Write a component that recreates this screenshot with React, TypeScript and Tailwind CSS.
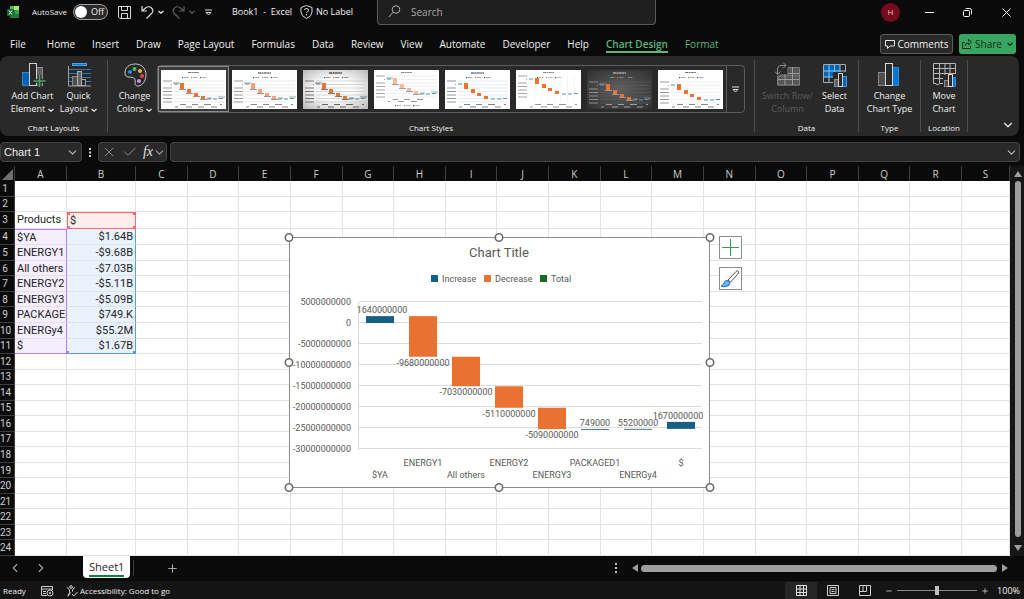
import { useState } from 'react'
import type { ReactNode } from 'react'
import { Check, ChevronDown, ChevronLeft, ChevronRight, Minus, Plus, X } from 'lucide-react'

const MENU = [
  'File', 'Home', 'Insert', 'Draw', 'Page Layout', 'Formulas', 'Data', 'Review',
  'View', 'Automate', 'Developer', 'Help', 'Chart Design', 'Format',
]

const COLUMNS = 'ABCDEFGHIJKLMNOPQRS'.split('')

const CELLS: Record<number, [string, string]> = {
  3: ['Products', '$'],
  4: ['$YA', '$1.64B'],
  5: ['ENERGY1', '-$9.68B'],
  6: ['All others', '-$7.03B'],
  7: ['ENERGY2', '-$5.11B'],
  8: ['ENERGY3', '-$5.09B'],
  9: ['PACKAGED1', '$749.K'],
  10: ['ENERGy4', '$55.2M'],
  11: ['$', '$1.67B'],
}

const SERIES = [
  { name: '$YA', value: 1640000000 },
  { name: 'ENERGY1', value: -9680000000 },
  { name: 'All others', value: -7030000000 },
  { name: 'ENERGY2', value: -5110000000 },
  { name: 'ENERGY3', value: -5090000000 },
  { name: 'PACKAGED1', value: 749000 },
  { name: 'ENERGy4', value: 55200000 },
  { name: '$', value: 1670000000 },
]

const BLUE = '#156082'
const ORANGE = '#e97132'
const GREEN = '#196b24'

type ThumbStyle = {
  id: number
  bg: string
  ink: string
  grid: string
  bar: string
  top: number
  bold?: boolean
  legendBottom?: boolean
  vertical?: boolean
  labels?: boolean
}

const THUMBS: ThumbStyle[] = [
  { id: 1, bg: '#ffffff', ink: '#777777', grid: '#e4e4e4', bar: '#ed7331', top: 13, labels: true },
  { id: 2, bg: '#ffffff', ink: '#777777', grid: '#e4e4e4', bar: '#f3a37c', top: 13, bold: true, labels: true },
  { id: 3, bg: 'url(#silver)', ink: '#555555', grid: '#c4c4c4', bar: '#ed7331', top: 13, bold: true, labels: true },
  { id: 4, bg: '#ffffff', ink: '#888888', grid: '#e8e8e8', bar: '#f5b8a2', top: 8, legendBottom: true, labels: true },
  { id: 5, bg: '#ffffff', ink: '#667788', grid: '#dde4ea', bar: '#ed7331', top: 13, bold: true },
  { id: 6, bg: '#ffffff', ink: '#888888', grid: '#ececec', bar: '#ed7331', top: 8, vertical: true },
  { id: 7, bg: 'url(#charcoal)', ink: '#a8a8a8', grid: '#5c5c5c', bar: '#ed7331', top: 14, bold: true, labels: true },
  { id: 8, bg: '#ffffff', ink: '#777777', grid: '#ececec', bar: '#ed7331', top: 14 },
]

function ChartThumb({ s }: { s: ThumbStyle }) {
  const bars = s.labels
    ? [[21, 0, 6], [28, 6, 4], [35, 10, 3], [42, 13, 3]]
    : [[21, 0, 6], [28, 6, 4], [34, 10, 3], [41, 13, 3]]
  return (
    <svg viewBox="0 0 65 39" className="block h-[39px] w-[65px]" aria-hidden="true">
      <defs>
        <radialGradient id="silver" r="0.7">
          <stop offset="0.4" stopColor="#ffffff" />
          <stop offset="1" stopColor="#b9b9b9" />
        </radialGradient>
        <radialGradient id="charcoal" r="0.7">
          <stop offset="0" stopColor="#606060" />
          <stop offset="1" stopColor="#303030" />
        </radialGradient>
      </defs>
      <rect width="65" height="39" fill={s.bg} />
      <path d={s.bold ? 'M26 3h13' : 'M27 2.500h11'} stroke={s.ink} strokeWidth={s.bold ? 1.500 : 1} strokeDasharray="3 .4 2 .4" />
      {[0, 1, 2].map((i) => (
        <g key={i} transform={`translate(${21 + i * 9} ${s.legendBottom ? 35.500 : 7.500})`}>
          <rect y="-0.500" width="1.200" height="1.200" fill={[BLUE, ORANGE, GREEN][i]} />
          <path d="M2 0h4.500" stroke={s.ink} strokeWidth=".6" />
        </g>
      ))}
      {[0, 1, 2, 3, 4, 5, 6].map((i) => {
        const y = s.top - 2 + i * 3.500
        return (
          <g key={i}>
            <path d={`M${i === 1 ? 10 : 2} ${y}H11`} stroke={s.ink} strokeWidth="1" opacity=".75" />
            {s.vertical
              ? <path d={`M${19 + i * 6.500} ${s.top - 2}v26`} stroke={s.grid} strokeWidth=".6" />
              : <path d={`M13 ${y}H63`} stroke={s.grid} strokeWidth=".7" />}
          </g>
        )
      })}
      <path d={`M13 ${s.top + 1}h4M46 ${s.top + 16}h4M52 ${s.top + 16}h4M58 ${s.top + 15.500}h4`} stroke="#4a9bbb" strokeWidth="1" />
      {bars.map(([x, y, h]) => (
        <g key={x}>
          {s.labels && <path d={`M${x - 3} ${s.top + y + h + 0.500}h7`} stroke={s.ink} strokeWidth=".8" />}
          <rect x={x - 2} y={s.top + y} width="4" height={h} fill={s.bar} />
        </g>
      ))}
      {s.labels && <path d={`M12 ${s.top}h7M46 ${s.top + 15}h5M57 ${s.top + 14}h7`} stroke={s.ink} strokeWidth=".7" />}
      <path
        d={s.legendBottom ? 'M19 29.500h5M30 29.500h6M43 29.500h6M14 31.500h2M24 31.500h6M37 31.500h6' : 'M19 34.500h6M31 34.500h6M43 34.500h7M59 34.500h2M14 37h3M25 37h6M37 37h6M50 37h6'}
        stroke={s.ink}
        strokeWidth=".9"
      />
    </svg>
  )
}

function Caret({ className = '' }: { className?: string }) {
  return (
    <svg width="6" height="6" viewBox="0 0 6 6" fill="none" stroke="currentColor" strokeWidth="1.200" className={`inline-block shrink-0 ${className}`}>
      <path d="m.5 2 2.500 2.200L5.500 2" />
    </svg>
  )
}

function AddElementIcon() {
  return (
    <svg width="26" height="26" viewBox="0 0 26 26" fill="none">
      <rect x="2.500" y="10.500" width="7" height="13" fill="#0063b1" stroke="#2b88d8" />
      <rect x="16.500" y="5.500" width="6" height="18" fill="#616161" stroke="#8a8a8a" />
      <rect x="9.500" y="1.500" width="7" height="22" fill="#292929" stroke="#d0d0d0" />
      <path d="M19.500 13v12M13.500 19h12" stroke="#292929" strokeWidth="3.500" />
      <path d="M19.500 13v12M13.500 19h12" stroke="#4ca564" strokeWidth="1.500" />
    </svg>
  )
}

function QuickLayoutIcon() {
  return (
    <svg width="26" height="26" viewBox="0 0 26 26" fill="none">
      <rect x="6.500" y="1.500" width="14" height="2" fill="#0078d4" stroke="#4aa3e8" />
      <path d="M3 7.500h22M3 11.500h22M3 15.500h22M3 19.500h22" stroke="#2b7cbf" />
      <path d="M2.500 4v20H25" stroke="#a0a0a0" />
      <rect x="6.500" y="14.500" width="5" height="9" fill="#4d4d4d" stroke="#8a8a8a" />
      <rect x="15.500" y="17.500" width="4" height="6" fill="#292929" stroke="#a0a0a0" />
      <rect x="11.500" y="9.500" width="4" height="14" fill="#616161" stroke="#b0b0b0" />
    </svg>
  )
}

function PaletteIcon() {
  return (
    <svg width="26" height="26" viewBox="0 0 26 26" fill="none">
      <path d="M3 11C3 5 7.500 2 13.500 2S24 6.500 24 12.500c0 6-3.500 11.500-8 11.500-5 0-1.500-4.500-3.500-7.500C10.500 14 3 17 3 11Z" stroke="#c8c8c8" />
      <circle cx="8" cy="10" r="2" fill="#2b88d8" />
      <circle cx="12.500" cy="7" r="2" fill="#4ec06a" />
      <circle cx="18" cy="9" r="2" fill="#f2b04c" />
      <circle cx="20" cy="14" r="2" fill="#e0483e" />
      <circle cx="17" cy="19" r="2" fill="#c792e0" />
    </svg>
  )
}

function SwitchIcon() {
  return (
    <svg width="26" height="26" viewBox="0 0 26 26" fill="none" stroke="#7d7d7d">
      <path d="M13 5.500h11.500v17.500h-22V14" fill="#565656" />
      <path d="M3 14h21.500v9H3Z" fill="#565656" />
      <path d="M13 11.500h11.500M3 17.500h21.500M10 12v11M17.500 5v18" stroke="#9a9a9a" />
      <path d="M1 2h11v10H1Z" fill="#292929" stroke="none" />
      <path d="M2.500 12.500V7q0-3.500 3.500-3.500h5M8 .5l3 3-3 3M0 9.500l2.500 3 3-3" stroke="#8a8a8a" />
    </svg>
  )
}

function SelectDataIcon() {
  return (
    <svg width="26" height="26" viewBox="0 0 26 26" fill="none">
      <path d="M1.500 2.500h22v18h-22Z" stroke="#a8a8a8" />
      <path d="M2 3h16v12H2Z" fill="#0067b8" />
      <path d="M7 3v17M12.500 3v17M18 3v17M2 9h21M2 15h21" stroke="#8fc4ee" />
      <path d="M11 10h15v16H11Z" fill="#292929" />
      <rect x="12.500" y="17.500" width="4" height="7" fill="#616161" stroke="#8a8a8a" />
      <rect x="20.500" y="14.500" width="4" height="10" fill="#0067b8" stroke="#3d9be0" />
      <rect x="16.500" y="11.500" width="4" height="13" fill="#292929" stroke="#d0d0d0" />
    </svg>
  )
}

function ChartTypeIcon() {
  return (
    <svg width="26" height="26" viewBox="0 0 26 26" fill="none">
      <rect x="2.500" y="10.500" width="7" height="13" fill="#4d4d4d" stroke="#8a8a8a" />
      <rect x="16.500" y="5.500" width="6" height="18" fill="#0078d4" stroke="#2b88d8" />
      <rect x="9.500" y="1.500" width="7" height="22" fill="#292929" stroke="#d8d8d8" />
    </svg>
  )
}

function MoveChartIcon() {
  return (
    <svg width="26" height="26" viewBox="0 0 26 26" fill="none">
      <path d="M12 21.500H9l-3 1.500-1-1.500H2.500v-20h22V12M3 6.500h21M3 11.500h21M3 16.500h13M8.500 2v19M14 2v15M19 2v12" stroke="#b8b8b8" />
      <path d="M12 13h14v13H12Z" fill="#292929" />
      <rect x="13.500" y="18.500" width="4" height="6" fill="#4d4d4d" stroke="#8a8a8a" />
      <rect x="21.500" y="15.500" width="3" height="9" fill="#0078d4" stroke="#2b88d8" />
      <rect x="17.500" y="12.500" width="4" height="12" fill="#292929" stroke="#d8d8d8" />
    </svg>
  )
}

function RibbonButton({ icon, lines, className = '', caret, disabled }: {
  icon: ReactNode
  lines: [string, string]
  className?: string
  caret?: boolean
  disabled?: boolean
}) {
  return (
    <button
      disabled={disabled}
      className={`flex shrink-0 flex-col items-center pt-0.5 text-[9px] leading-[13px] whitespace-nowrap disabled:text-[#5c5c5c] ${className}`}
    >
      {icon}
      <span className="mt-px">{lines[0]}</span>
      <span>
        {lines[1]}
        {caret && <Caret className="ml-[3px]" />}
      </span>
    </button>
  )
}

function RibbonGroup({ label, className, children }: { label: string; className: string; children: ReactNode }) {
  return (
    <section className={`flex shrink-0 flex-col justify-between border-r border-[#4d4d4d] ${className}`}>
      <div className="flex justify-center">{children}</div>
      <h2 className="text-center text-[8px] leading-2">{label}</h2>
    </section>
  )
}

function TitleBar() {
  const [autoSave, setAutoSave] = useState(false)
  return (
    <header className="flex h-7 shrink-0 items-center pb-1">
      <div className="flex w-[377px] shrink-0 items-center pl-[7px] text-[8px] whitespace-nowrap">
        <svg width="13" height="14" viewBox="0 0 13 14" aria-label="Excel">
          <path d="M3 1h5v4H3Z" fill="#55b84a" />
          <path d="M7 1h5v4H7Z" fill="#b5e26b" />
          <path d="M3 5h9v8H3Z" fill="#1e7a3d" />
          <path d="M8 5h4v4H8Z" fill="#3fa24a" />
          <rect y="4" width="7" height="7" rx="1" fill="#0f6b38" />
          <path d="m2 5.500 3 4m0-4-3 4" stroke="#fff" />
        </svg>
        <span className="ml-3">AutoSave</span>
        <button
          role="switch"
          aria-checked={autoSave}
          aria-label="AutoSave"
          onClick={() => setAutoSave(!autoSave)}
          className="ml-1.5 flex h-4 w-[35px] items-center gap-1 rounded-full border border-[#a0a0a0] bg-[#292929] pl-px text-[9px]"
        >
          <span className="h-3 w-3 rounded-full bg-white" />
          <span>{autoSave ? 'On' : 'Off'}</span>
        </button>
        <button aria-label="Save" className="ml-[10px]">
          <svg width="13" height="14" viewBox="0 0 13 14" fill="none" stroke="#d8d8d8">
            <path d="M.5 1.500h12v12H2l-1.500-1.500ZM3.500 1.500v4h6v-4M3.500 13.500v-5h6v5" />
          </svg>
        </button>
        <button aria-label="Undo" className="ml-[10px] flex items-center gap-1">
          <svg width="13" height="14" viewBox="0 0 13 14" fill="none" stroke="#d8d8d8" strokeWidth="1.200">
            <path d="M1 1v5h5M1 6l3.500-3Q8 .5 10.500 3T11 8l-5.500 5.500" />
          </svg>
          <Caret />
        </button>
        <button aria-label="Redo" disabled className="ml-2 flex items-center gap-1 text-[#5c5c5c]">
          <svg width="13" height="14" viewBox="0 0 13 14" fill="none" stroke="currentColor" strokeWidth="1.200">
            <path d="M12 1v5H7M12 6 8.500 3Q5 .5 2.500 3T2 8l5.500 5.500" />
          </svg>
          <Caret />
        </button>
        <button aria-label="Customize toolbar" className="ml-[10px]">
          <svg width="7" height="7" viewBox="0 0 7 7" fill="none" stroke="#e0e0e0">
            <path d="M0 1h7M1 3.500h5L3.500 6Z" />
          </svg>
        </button>
        <span className="ml-5 text-[9px]">Book1&nbsp; -&nbsp; Excel</span>
        <svg width="13" height="14" viewBox="0 0 13 14" fill="none" stroke="#d8d8d8" className="ml-2">
          <path d="M6.500.5 12 2.500V7q0 4-5.500 6.500Q1 11 1 7V2.500ZM4.500 5q0-1.500 2-1.500t2 1.500-2 2.500M6.500 9v1.500" />
        </svg>
        <span className="ml-[3px] text-[9px]">No Label</span>
      </div>
      <label className="flex h-[26px] w-[279px] items-center gap-[10px] rounded-b border border-t-0 border-[#5a5a5a] bg-[#1f1f1f] px-[10px]">
        <svg width="13" height="13" viewBox="0 0 13 13" fill="none" stroke="#b0b0b0">
          <circle cx="8" cy="4.500" r="3.800" />
          <path d="M5.300 7.200.8 12" />
        </svg>
        <input
          type="search"
          placeholder="Search"
          aria-label="Search"
          className="min-w-0 flex-1 bg-transparent text-[10px] leading-4 outline-none placeholder:text-[#a8a8a8]"
        />
      </label>
      <div className="ml-auto flex items-center pr-[13px]">
        <button aria-label="Account" className="mr-[25px] flex h-[19px] w-[19px] items-center justify-center rounded-full bg-[#750b1c] text-[8px] text-[#f0c0c4]">
          H
        </button>
        <button aria-label="Minimize" className="mr-[29px]">
          <svg width="9" height="9" viewBox="0 0 9 9"><path d="M0 4.500h9" stroke="#fff" /></svg>
        </button>
        <button aria-label="Restore" className="mr-[30px]">
          <svg width="9" height="9" viewBox="0 0 9 9" fill="none" stroke="#fff">
            <rect x=".5" y="2.500" width="6" height="6" rx="1" />
            <path d="M2.500 1q0-.5 1-.5h3q2 0 2 2v3q0 1-.5 1" />
          </svg>
        </button>
        <button aria-label="Close">
          <svg width="9" height="9" viewBox="0 0 9 9"><path d="m.5.5 8 8m0-8-8 8" stroke="#fff" /></svg>
        </button>
      </div>
    </header>
  )
}

function MenuBar() {
  return (
    <div className="flex h-7 shrink-0 items-center pt-1 pr-2">
      <nav className="flex items-center gap-[17px] pl-[10px] text-[10px] leading-[14px] whitespace-nowrap">
        {MENU.map((item) => (
          <button
            key={item}
            className={
              item === 'Chart Design'
                ? 'border-b-2 border-[#5fb57d] pt-[2px] font-semibold text-[#5fb57d]'
                : item === 'Format' ? 'text-[#5fb57d]' : 'first:mr-1'
            }
          >
            {item}
          </button>
        ))}
      </nav>
      <div className="ml-auto flex gap-[6px] text-[10px]">
        <button className="flex h-5 w-[73px] items-center justify-center gap-[3px] rounded-[3px] border border-[#5c5c5c] bg-[#292929]">
          <svg width="10" height="10" viewBox="0 0 10 10" fill="none" stroke="#e8e8e8">
            <path d="M.5 1.500h9v5.500H5L2.500 9.500V7h-2Z" />
          </svg>
          Comments
        </button>
        <button className="flex h-5 w-[57px] items-center justify-center gap-[3px] rounded-[3px] bg-[#37a660] text-[#0d2b18]">
          <svg width="10" height="10" viewBox="0 0 10 10" fill="none" stroke="currentColor">
            <path d="M3 3.500H.5v6h8V7M3 7q0-3 3.500-3V6l3-3-3-2.500v2" />
          </svg>
          Share
          <Caret className="ml-[2px]" />
        </button>
      </div>
    </div>
  )
}

function Ribbon() {
  const [selected, setSelected] = useState(1)
  return (
    <div className="mr-[5px] flex h-20 shrink-0 justify-between rounded-lg bg-[#292929]">
      <div className="flex pt-1 pb-1">
        <RibbonGroup label="Chart Layouts" className="w-[108px]">
          <RibbonButton icon={<AddElementIcon />} lines={['Add Chart', 'Element']} caret className="w-[50px]" />
          <RibbonButton icon={<QuickLayoutIcon />} lines={['Quick', 'Layout']} caret className="w-[42px]" />
        </RibbonGroup>
        <RibbonGroup label="Chart Styles" className="w-[647px]">
          <div className="flex flex-1 pl-1">
            <RibbonButton icon={<PaletteIcon />} lines={['Change', 'Colors']} caret className="w-[45px]" />
            <div className="mt-[5px] flex h-12 rounded border border-[#5c5c5c]">
              {THUMBS.map((s) => (
                <button
                  key={s.id}
                  aria-label={`Style ${s.id}`}
                  onClick={() => setSelected(s.id)}
                  className={`flex w-[71px] items-center justify-center border ${selected === s.id ? 'border-[#8a8a8a] bg-[#3a3a3a]' : 'border-transparent'}`}
                >
                  <ChartThumb s={s} />
                </button>
              ))}
              <button aria-label="More styles" className="flex w-[18px] items-center justify-center rounded-r border-l border-[#5c5c5c]">
                <svg width="7" height="7" viewBox="0 0 7 7" fill="none" stroke="#e0e0e0">
                  <path d="M0 1h7M1 3.500h5L3.500 6Z" />
                </svg>
              </button>
            </div>
          </div>
        </RibbonGroup>
        <RibbonGroup label="Data" className="w-[104px]">
          <RibbonButton icon={<SwitchIcon />} lines={['Switch Row/', 'Column']} disabled className="w-[56px]" />
          <RibbonButton icon={<SelectDataIcon />} lines={['Select', 'Data']} className="w-[38px]" />
        </RibbonGroup>
        <RibbonGroup label="Type" className="w-[62px]">
          <RibbonButton icon={<ChartTypeIcon />} lines={['Change', 'Chart Type']} />
        </RibbonGroup>
        <RibbonGroup label="Location" className="w-[47px]">
          <RibbonButton icon={<MoveChartIcon />} lines={['Move', 'Chart']} />
        </RibbonGroup>
      </div>
      <button aria-label="Collapse ribbon" className="self-end p-1">
        <ChevronDown size={14} strokeWidth={2} />
      </button>
    </div>
  )
}

function FormulaBar() {
  return (
    <div className="mt-1.5 mr-1 mb-1 flex h-5 shrink-0 items-stretch">
      <div className="flex w-[82px] items-center rounded border border-[#454545] bg-[#292929] pr-[2px]">
        <input
          aria-label="Name box"
          defaultValue="Chart 1"
          className="w-0 flex-1 bg-transparent pl-[3px] font-['Liberation_Sans',sans-serif] text-[11px] outline-none"
        />
        <ChevronDown size={13} className="text-[#b8b8b8]" />
      </div>
      <svg width="16" height="20" viewBox="0 0 16 20" fill="#d0d0d0" aria-hidden="true">
        <path d="M7 6h2v2H7ZM7 9.500h2v2H7ZM7 13h2v2H7Z" />
      </svg>
      <div className="flex w-[69px] items-center justify-between rounded border border-[#454545] bg-[#292929] pl-[2px] text-[#8a8a8a]">
        <button aria-label="Cancel"><X size={16} strokeWidth={1.500} /></button>
        <button aria-label="Enter"><Check size={16} strokeWidth={1.500} /></button>
        <button aria-label="Insert function" className="flex items-center font-['Liberation_Serif',serif] text-[14px] leading-4 text-[#e0e0e0] italic">
          fx
          <ChevronDown size={13} className="text-[#a0a0a0]" />
        </button>
      </div>
      <div className="ml-[3px] flex flex-1 items-center rounded border border-[#454545] bg-[#292929] pr-px">
        <input aria-label="Formula" className="w-0 flex-1 bg-transparent pl-2 text-[11px] outline-none" />
        <ChevronDown size={13} className="text-[#b8b8b8]" />
      </div>
    </div>
  )
}

// one axis step (5,000,000,000) is 21 units tall
const yOf = (v: number) => 86 - (v / 5000000000) * 21

function WaterfallChart() {
  let total = 0
  const bars = SERIES.map((d, i) => {
    const from = total
    total += d.value
    return { ...d, from, to: total, cx: 91 + i * 43 }
  })
  const handles = [[0, 0], [210, 0], [421, 0], [0, 125], [421, 125], [0, 250], [210, 250], [421, 250]]

  return (
    <svg
      viewBox="-5 -5 431 260"
      className="h-[260px] w-[431px]"
      fontFamily="Roboto, sans-serif"
      fontSize="9"
      fill="#595959"
      role="img"
      aria-label="Waterfall chart"
    >
      <rect x=".5" y=".5" width="420" height="250" fill="#ffffff" stroke="#8c8c8c" />
      <text x="210" y="20" fontSize="13" textAnchor="middle">Chart Title</text>
      {[['Increase', BLUE, 142], ['Decrease', ORANGE, 195], ['Total', GREEN, 251]].map(([name, color, x]) => (
        <g key={name} transform={`translate(${x} 38)`}>
          <rect width="7" height="7" fill={color as string} />
          <text x="11" y="7">{name}</text>
        </g>
      ))}
      {[0, 1, 2, 3, 4, 5, 6, 7].map((i) => {
        const v = 5000000000 * (1 - i)
        return (
          <g key={i}>
            <path d={`M70 ${yOf(v) - 0.500}H413`} stroke="#dcdcdc" />
            <text x="62" y={yOf(v) + 3} textAnchor="end">{v}</text>
          </g>
        )
      })}
      <path d="M69.500 65v148" stroke="#dcdcdc" />
      {bars.map((b, i) => {
        const top = yOf(Math.max(b.from, b.to))
        const height = Math.max(Math.abs(yOf(b.to) - yOf(b.from)), 0.800)
        return (
          <g key={b.name} textAnchor="middle">
            <rect x={b.cx - 14} y={top} width="28" height={height} fill={b.value > 0 ? BLUE : ORANGE} />
            <text x={i === 0 || i === 7 ? b.cx + (i ? -3 : 2) : b.cx} y={b.value > 0 ? top - 3 : top + height + 9}>{b.value}</text>
            <text x={b.cx} y={i % 2 ? 229 : 241}>{b.name}</text>
          </g>
        )
      })}
      {handles.map(([x, y]) => (
        <circle key={`${x}-${y}`} cx={x} cy={y + 0.500} r="3.700" fill="#ffffff" stroke="#6b6b6b" strokeWidth="1.600" />
      ))}
    </svg>
  )
}

function Handle({ className }: { className: string }) {
  return <span className={`absolute z-10 h-[3px] w-[3px] ${className}`} />
}

function cellClass(col: string, row: number) {
  if (col === 'B' && row === 3) return 'border-t border-l border-[#ff6b6b] bg-[#ffecec]'
  if (row >= 4 && row <= 11) {
    if (col === 'A') return `bg-[#f5eefe] border-r-[#b57cf0] ${row === 4 ? 'border-t border-t-[#b57cf0]' : ''} ${row === 11 ? 'border-b-[#b57cf0]' : 'border-b-[#e6dff0]'}`
    if (col === 'B') return `bg-[#eaf2fe] border-r-[#5b9bf5] text-right ${row === 11 ? 'border-b-[#5b9bf5]' : 'border-b-[#dbe4f0]'}`
  }
  return 'border-[#e3e3e3]'
}

function Sheet() {
  const rows = Array.from({ length: 24 }, (_, i) => i + 1)
  return (
    <main className="relative flex min-h-0 flex-1">
      <div className="min-w-0 flex-1">
        <table className="h-full w-full table-fixed border-separate border-spacing-0 bg-white font-['Roboto',sans-serif] text-[11px] leading-[13px] text-[#242424]">
          <colgroup>
            <col className="w-[15px]" />
            <col className="w-[52px]" />
            <col className="w-[69px]" />
            {COLUMNS.slice(2, -1).map((c) => <col key={c} />)}
            <col className="w-[48px]" />
          </colgroup>
          <thead className="bg-[#0a0a0a] font-['Open_Sans',sans-serif] text-[10px] text-[#cfcfcf]">
            <tr>
              <th aria-label="Select all" className="border-r border-[#3d3d3d] p-0">
                <svg viewBox="0 0 14 15" className="block h-[15px] w-[14px]"><path d="M13 3v11H2Z" fill="#6e6e6e" /></svg>
              </th>
              {COLUMNS.map((c) => (
                <th key={c} scope="col" className="border-r border-[#3d3d3d] p-0 pt-0.5 font-normal">{c}</th>
              ))}
            </tr>
          </thead>
          <tbody>
            {rows.map((r) => (
              <tr key={r}>
                <th scope="row" className="border-r border-b border-[#3d3d3d] bg-[#0a0a0a] p-0 pr-1 text-[10px] font-normal text-[#cfcfcf]">{r}</th>
                {COLUMNS.map((c, i) => (
                  <td key={c} className={`relative overflow-hidden border-r border-b p-0 px-0.5 whitespace-nowrap ${cellClass(c, r)}`}>
                    {CELLS[r]?.[i]}
                    {c === 'B' && r === 3 && (
                      <>
                        <Handle className="-top-px -left-px bg-[#ff5c5c]" />
                        <Handle className="-top-px -right-px bg-[#ff5c5c]" />
                        <Handle className="-right-px -bottom-px bg-[#ff5c5c]" />
                        <Handle className="-bottom-px -left-px bg-[#b57cf0]" />
                      </>
                    )}
                    {c === 'B' && r === 11 && (
                      <>
                        <Handle className="-right-px -bottom-px bg-[#4a8ff5]" />
                        <Handle className="-bottom-px -left-px bg-[#b57cf0]" />
                      </>
                    )}
                  </td>
                ))}
              </tr>
            ))}
          </tbody>
        </table>
      </div>

      {/* Vertical scroll bar */}
      <div className="flex w-[14px] shrink-0 flex-col items-center gap-1 bg-[#161616] py-[5px] pl-0.5">
        <svg width="8" height="6" viewBox="0 0 8 6"><path d="M4 0 8 6H0Z" fill="#9e9e9e" /></svg>
        <div className="w-[6px] flex-1 rounded-full bg-[#9e9e9e]" />
        <svg width="8" height="6" viewBox="0 0 8 6" className="mt-1"><path d="M0 0h8L4 6Z" fill="#9e9e9e" /></svg>
      </div>

      {/* Floating chart with its side buttons */}
      <div className="absolute top-[66px] left-[284px] flex gap-1">
        <WaterfallChart />
        <div className="mt-1 flex flex-col gap-2">
          <button aria-label="Chart elements" className="border border-[#8c8c8c] bg-white">
            <svg width="21" height="21" viewBox="0 0 21 21"><path d="M10.500 2v17M2 10.500h17" stroke="#3f9a5a" /></svg>
          </button>
          <button aria-label="Chart styles" className="border border-[#8c8c8c] bg-white">
            <svg width="21" height="21" viewBox="0 0 21 21" fill="none">
              <path d="M8 12 16 3.500q2-1.500 2.500 0 .5 1-1 3L10.500 14Z" stroke="#4d4d4d" />
              <path d="M1 18q2.500-.5 3-3t3-2.500q2.500 0 3 2.500 0 3-4 3.500-3 .5-5-.5Z" fill="#6fb1ea" stroke="#1f74c4" />
            </svg>
          </button>
        </div>
      </div>
    </main>
  )
}

function SheetTabs() {
  return (
    <div className="flex h-[25px] shrink-0 items-start pr-4">
      <div className="flex h-6 w-[83px] items-center gap-3 pl-2 text-[#a0a0a0]">
        <button aria-label="Previous sheet"><ChevronLeft size={14} /></button>
        <button aria-label="Next sheet"><ChevronRight size={14} /></button>
      </div>
      <button className="h-[22px] rounded-b bg-white px-1.5 text-[11px] leading-[17px] text-[#242424]">
        <span className="block border-b-2 border-[#107c41]">Sheet1</span>
      </button>
      <span className="mt-1 ml-[3px] h-4 w-px bg-[#3d3d3d]" />
      <button aria-label="New sheet" className="mt-1.5 ml-8 text-[#a8a8a8]"><Plus size={13} strokeWidth={2} /></button>
      <div className="ml-auto flex h-6 w-[400px] items-center gap-[3px]">
        <svg width="16" height="12" viewBox="0 0 16 12" fill="#c0c0c0" className="mr-[5px]"><path d="M7 1h2v2H7ZM7 5h2v2H7ZM7 9h2v2H7Z" /></svg>
        <svg width="6" height="8" viewBox="0 0 6 8"><path d="M6 0v8L0 4Z" fill="#9e9e9e" /></svg>
        <div className="h-[7px] flex-1 rounded-full bg-[#9e9e9e]" />
        <svg width="6" height="8" viewBox="0 0 6 8" className="ml-[2px]"><path d="M0 0v8l6-4Z" fill="#9e9e9e" /></svg>
      </div>
    </div>
  )
}

function StatusBar() {
  const [zoom, setZoom] = useState(100)
  return (
    <footer className="flex h-[18px] shrink-0 items-center bg-[#141414] pt-px pr-1 pl-[3px] text-[8px] whitespace-nowrap">
      <span className="w-[38px]">Ready</span>
      <svg width="13" height="12" viewBox="0 0 13 12" fill="none" stroke="#d0d0d0">
        <path d="M6 10.500H.5v-9h11V5M.5 4h11M2 6.500h3M2 8.500h3" />
        <circle cx="9" cy="8" r="3" />
        <circle cx="9" cy="8" r=".8" />
      </svg>
      <button className="ml-3 flex items-center gap-[2px]">
        <svg width="12" height="12" viewBox="0 0 12 12" fill="none" stroke="#d8d8d8">
          <circle cx="5" cy="2" r="1.300" />
          <path d="M.8 2.500 3.500 4.500v3L2 11M9 2.500 6.500 4.500v2M2 11.300l2.500-4M6 9l1.800 2L11.500 7" />
        </svg>
        Accessibility: Good to go
      </button>
      <div className="ml-auto flex h-full items-center">
        <button aria-label="Normal view" className="flex h-full w-8 items-center justify-center bg-[#262626]">
          <svg width="11" height="11" viewBox="0 0 11 11" fill="none" stroke="#e0e0e0"><path d="M.5.5h10v10H.5ZM4 0v11M7.500 0v11M0 4h11M0 7.500h11" /></svg>
        </button>
        <button aria-label="Page layout view" className="flex h-full w-8 items-center justify-center">
          <svg width="12" height="11" viewBox="0 0 12 11" fill="none" stroke="#d0d0d0"><path d="M.5.5h11v10H.5ZM3 2.500h6v6H3ZM4.500 4.500h3M4.500 6.500h3" /></svg>
        </button>
        <button aria-label="Page break view" className="flex h-full w-8 items-center justify-center">
          <svg width="12" height="11" viewBox="0 0 12 11" fill="none" stroke="#d0d0d0"><path d="M.5.5h11v10H.5ZM.5 6.500h7v-6M4 .5v6" /></svg>
        </button>
        <button aria-label="Zoom out" className="ml-1"><Minus size={8} /></button>
        <input
          type="range"
          aria-label="Zoom"
          min={10}
          max={190}
          value={zoom}
          onChange={(e) => setZoom(Number(e.target.value))}
          className="mx-1 h-3 w-20 appearance-none bg-[linear-gradient(#8a8a8a,#8a8a8a)] bg-[length:100%_1px] bg-center bg-no-repeat [&::-webkit-slider-thumb]:h-[9px] [&::-webkit-slider-thumb]:w-1 [&::-webkit-slider-thumb]:appearance-none [&::-webkit-slider-thumb]:bg-[#c0c0c0]"
        />
        <button aria-label="Zoom in"><Plus size={8} /></button>
        <span className="ml-2 text-[9px]">{zoom}%</span>
      </div>
    </footer>
  )
}

export default function App() {
  return (
    <div className="flex h-screen flex-col overflow-hidden bg-[#0a0a0a] font-['Open_Sans','Noto_Sans',sans-serif] text-[#f0f0f0]">
      <TitleBar />
      <MenuBar />
      <Ribbon />
      <FormulaBar />
      <Sheet />
      <SheetTabs />
      <StatusBar />
    </div>
  )
}
